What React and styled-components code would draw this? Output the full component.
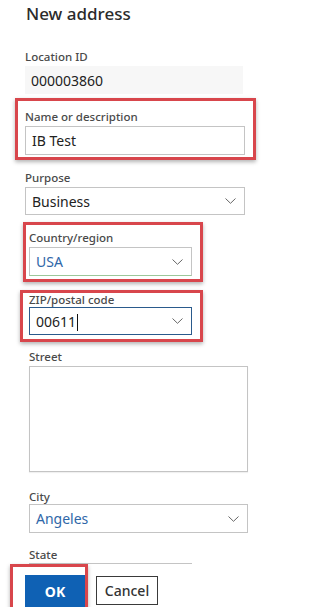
import React from "react";
import styled, { createGlobalStyle } from "styled-components";

const Global = createGlobalStyle`
  html, body { margin: 0; padding: 0; background: #fff; }
  body { font-family: "Noto Sans", "Open Sans", Arial, sans-serif; color: #222; }
  * { box-sizing: border-box; }
`;

const Page = styled.div`
  width: 332px;
  height: 607px;
  overflow: hidden;
  padding: 2px 0 0 25px;
  display: flex;
  flex-direction: column;
  background: #fff;
`;

const Title = styled.h1`
  margin: 0;
  font-size: 17px;
  line-height: 24px;
  font-weight: 500;
  color: #2b2b2b;
  padding-left: 1px;
`;

const Field = styled.div`
  display: flex;
  flex-direction: column;
  margin-top: ${(p) => p.$mt || 0}px;
  margin-left: ${(p) => p.$indent || 0}px;
`;

const Label = styled.label`
  font-size: 11.5px;
  line-height: 14px;
  font-weight: 500;
  color: #4a4a4a;
`;

const ReadOnly = styled.div`
  margin-top: 2px;
  width: 218px;
  height: 28px;
  background: #f7f7f7;
  padding: 0 6px;
  display: flex;
  align-items: center;
  font-size: 14px;
  color: #222;
`;

const Box = styled.div`
  margin-top: ${(p) => (p.$mt === undefined ? 2 : p.$mt)}px;
  width: ${(p) => p.$w}px;
  height: ${(p) => p.$h}px;
  border: 1px solid ${(p) => (p.$focus ? "#2a5a8c" : "#c4c4c4")};
  ${(p) => (p.$ok ? "border-bottom-color: #9cc79a;" : "")}
  background: #fff;
  padding: 0 8px 0 6px;
  display: flex;
  align-items: center;
  justify-content: space-between;
  font-size: 14px;
  color: ${(p) => (p.$link ? "#2f67a8" : "#222")};
`;

const TextArea = styled.div`
  margin-top: 2px;
  width: 219px;
  height: 106px;
  border: 1px solid #c4c4c4;
  box-shadow: 0 1px 1px rgba(0, 0, 0, 0.06);
  background: #fff;
`;

const Caret = styled.span`
  display: inline-block;
  width: 1px;
  height: 17px;
  background: #111;
  margin-left: 1px;
  vertical-align: -4px;
`;

const Highlight = styled.div`
  align-self: flex-start;
  border: 3px solid #d8464c;
  box-shadow: 0 2px 4px rgba(0, 0, 0, 0.3);
  margin-top: ${(p) => p.$mt}px;
  margin-left: ${(p) => p.$ml}px;
  padding: ${(p) => p.$pad};
  display: flex;
  flex-direction: column;
`;

const StateLine = styled.div`
  margin-top: 1px;
  width: 163px;
  height: 1px;
  background: #c4c4c4;
`;

const Footer = styled.div`
  display: flex;
  align-items: flex-start;
  margin-left: -15px;
`;

const PrimaryButton = styled.button`
  width: 60px;
  height: 34px;
  border: none;
  background: #0f61b4;
  color: #fff;
  font-family: inherit;
  font-size: 14px;
  font-weight: 700;
  padding: 0 0 2px;
`;

const SecondaryButton = styled.button`
  margin-top: 12px;
  margin-left: 8px;
  width: 62px;
  height: 29px;
  border: 1px solid #3a3a3a;
  background: #fff;
  color: #333;
  font-family: inherit;
  font-size: 14px;
  font-weight: 500;
  padding: 0;
`;

const Chevron = () => (
  <svg width="11" height="6" viewBox="0 0 11 6" fill="none">
    <polyline points="0.5,0.5 5.5,5.3 10.5,0.5" stroke="#666" strokeWidth="1" />
  </svg>
);

export default function App() {
  return (
    <>
      <Global />
      <Page>
        <Title>New address</Title>

        <Field $mt={24}>
          <Label>Location ID</Label>
          <ReadOnly>000003860</ReadOnly>
        </Field>

        <Highlight $mt={4} $ml={-10} $pad="9px 8px 2px 7px">
          <Label>Name or description</Label>
          <Box $w={220} $h={29}>IB Test</Box>
        </Highlight>

        <Field $mt={11}>
          <Label>Purpose</Label>
          <Box $w={220} $h={28}>
            <span>Business</span>
            <Chevron />
          </Box>
        </Field>

        <Highlight $mt={7} $ml={-2} $pad="6px 8px 3px 3px">
          <Label>Country/region</Label>
          <Box $w={163} $h={29} $link $ok>
            <span>USA</span>
            <Chevron />
          </Box>
        </Highlight>

        <Highlight $mt={8} $ml={-5} $pad="0 8px 4px 6px">
          <Label>ZIP/postal code</Label>
          <Box $w={163} $h={28} $mt={0} $focus>
            <span>
              00611
              <Caret />
            </span>
            <Chevron />
          </Box>
        </Highlight>

        <Field $mt={8} $indent={4}>
          <Label>Street</Label>
          <TextArea />
        </Field>

        <Field $mt={18} $indent={4}>
          <Label>City</Label>
          <Box $w={219} $h={29} $mt={0} $link>
            <span>Angeles</span>
            <Chevron />
          </Box>
        </Field>

        <Field $mt={15} $indent={4}>
          <Label>State</Label>
          <StateLine />
        </Field>

        <Footer>
          <Highlight $mt={0} $ml={0} $pad="8px 0 0 12px">
            <PrimaryButton>OK</PrimaryButton>
          </Highlight>
          <SecondaryButton>Cancel</SecondaryButton>
        </Footer>
      </Page>
    </>
  );
}
